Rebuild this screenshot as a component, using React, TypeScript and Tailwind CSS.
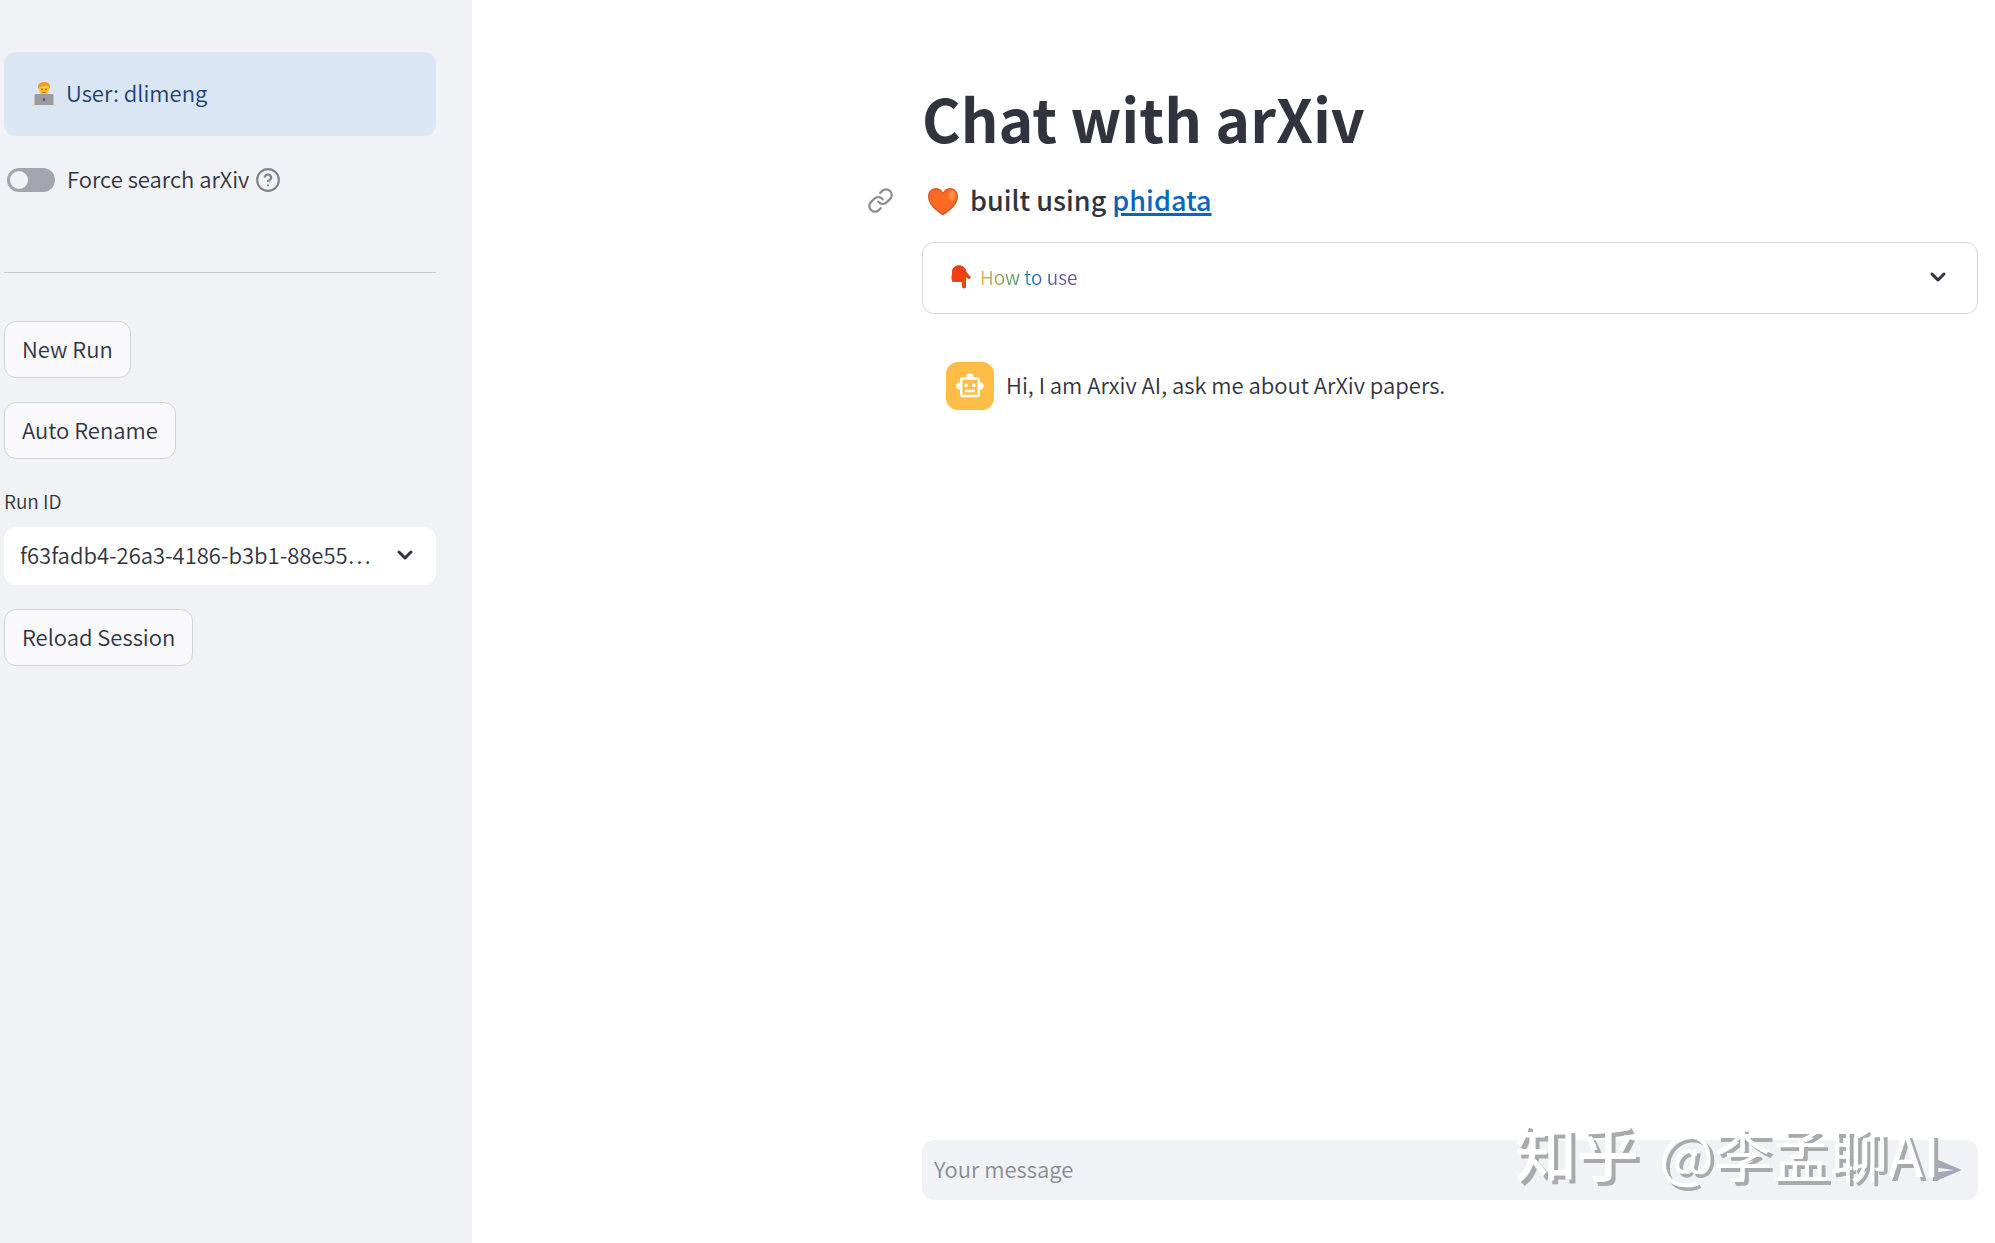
import { ChevronDown, CircleQuestionMark, Link } from 'lucide-react';
import { MdOutlineSmartToy, MdSend } from 'react-icons/md';

function TechnologistIcon() {
  return (
    <svg viewBox="0 0 24 24" className="w-6 h-6 shrink-0" aria-hidden="true">
      <path d="M3 22.500c0-5 3-7 9-7s9 2 9 7z" fill="#f6dc8c" />
      <rect x="9.500" y="10" width="5" height="6" fill="#e8a52a" />
      <ellipse cx="12" cy="7" rx="5.200" ry="6" fill="#fcc633" />
      <path d="M6.300 7C5 2 8 0 12 0s7 2 5.700 7c-.8-2.200-2-3-4-3.200-2.400-.2-5.800.2-7.400 3.200z" fill="#f09a2b" />
      <circle cx="10" cy="7.400" r=".8" fill="#6b4a1c" />
      <circle cx="14" cy="7.400" r=".8" fill="#6b4a1c" />
      <path d="M10.500 10.300h3" stroke="#bb3a22" strokeWidth="1" />
      <path d="M2.500 13.500q0-1.500 1.500-1.500h16q1.500 0 1.500 1.500V23h-19z" fill="#9b9b9f" />
      <rect x="10.800" y="16.500" width="2.400" height="2.400" fill="#5f5f66" />
      <path d="M0 23.500q.5-2.500 3-1.500v1.500zM21 23.500V22q2.500-1 3 1.500z" fill="#f5cf6b" />
    </svg>
  );
}

function HeartIcon() {
  return (
    <svg viewBox="0 0 30 28" className="w-[30px] h-7 shrink-0" aria-hidden="true">
      <path d="M15 27.500C7 22 0 16.500 0 8.500 0 3.500 3.500 0 7.800 0 11 0 13.500 1.600 15 4.400 16.500 1.600 19 0 22.200 0 26.500 0 30 3.500 30 8.500c0 8-7 13.500-15 19z" fill="#dc5a2a" />
      <path d="M15 25.500C8 20.500 1.300 15.500 1.300 8.500c0-4.300 2.900-7.100 6.600-7.100 3.300 0 5.700 2 7.100 5 1.400-3 3.800-5 7.100-5 3.700 0 6.600 2.800 6.600 7.100 0 7-6.700 12-13.700 17z" fill="#fb6a22" />
      <ellipse cx="24" cy="7.500" rx="3.300" ry="4.800" transform="rotate(18 24 7.500)" fill="#fb8e42" />
    </svg>
  );
}

function PointDownIcon() {
  return (
    <svg viewBox="0 0 20 24" className="w-5 h-6 shrink-0" aria-hidden="true">
      <path d="M1 8C1 3 4 .5 8 .5c4 0 6.500 2.500 7.500 6.500l4 4.800c.8 1.700-1 2.800-2.500 2L15 12.500v9.300c0 2.300-4 2.300-4 0V17l-9.500-.3C0 14 1 11 1 8z" fill="#d4500f" />
      <path d="M1 8C1 3 4 .5 8 .5c3.500 0 6 2 7 5.500l-3 6-1 4.500-9.500.2C0 14 1 11 1 8z" fill="#f03e10" />
    </svg>
  );
}

function SidebarButton({ children }: { children: string }) {
  return (
    <button
      type="button"
      className="h-[57px] px-[17px] pb-1 rounded-xl border border-[#d2d3d8] bg-[#f9f9fb] text-[22px] leading-8 whitespace-nowrap"
    >
      {children}
    </button>
  );
}

function Sidebar() {
  return (
    <aside className="w-[472px] shrink-0 bg-[#f0f2f6] pl-1 pr-9 pt-[52px]">
      <div className="h-[84px] px-7 flex items-center gap-2.5 rounded-xl bg-[#dae6f3] text-[#1c4173] text-[22px] leading-8">
        <TechnologistIcon />
        <p className="pb-1">User: dlimeng</p>
      </div>

      <div className="mt-7 h-8 pl-[3px] flex items-center">
        <label className="flex items-center gap-3 text-[22px] leading-8">
          <input
            type="checkbox"
            role="switch"
            className="appearance-none w-12 h-6 rounded-full bg-[#a3a4ad] before:block before:w-[18px] before:h-[18px] before:m-[3px] before:rounded-full before:bg-[#f0f2f6] checked:before:ml-[27px]"
          />
          <span className="pb-1">Force search arXiv</span>
        </label>
        <button type="button" aria-label="Help" className="ml-1.5 text-[#83848c]">
          <CircleQuestionMark size={26} />
        </button>
      </div>

      <hr className="mt-[76px] border-[#c9cbd1]" />

      <div className="mt-12 flex flex-col items-start gap-6">
        <SidebarButton>New Run</SidebarButton>
        <SidebarButton>Auto Rename</SidebarButton>
        <div className="w-full">
          <label htmlFor="run-id" className="block h-11 pt-1 text-[19px] leading-7">Run ID</label>
          <div className="relative">
            <select
              id="run-id"
              className="appearance-none w-full h-[58px] pl-4 pr-14 pb-1 rounded-xl bg-white text-[22px] leading-8"
            >
              <option>f63fadb4-26a3-4186-b3b1-88e55…</option>
            </select>
            <ChevronDown size={24} strokeWidth={3} className="absolute right-[19px] top-4 pointer-events-none" />
          </div>
        </div>
        <SidebarButton>Reload Session</SidebarButton>
      </div>
    </aside>
  );
}

export default function App() {
  return (
    <div className="flex min-h-screen bg-white text-[#31333f] font-[350] font-['Noto_Sans_CJK_KR',sans-serif]">
      <Sidebar />

      <main className="flex-1 min-w-0 flex flex-col pr-[17px] pl-[60px]">
        <div className="w-full max-w-[1056px] ml-auto flex-1 flex flex-col">
          <h1 className="mt-[78px] text-[59px] leading-20 font-bold">Chat with arXiv</h1>

          <div className="relative mt-[26px] h-9 flex items-center gap-3 pl-1.5 text-[27px] leading-9 font-medium">
            <a href="#built-using-phidata" aria-label="Link to heading" className="absolute -left-[55px] top-[3px] text-[#8b8c92]">
              <Link size={27} strokeWidth={2} />
            </a>
            <HeartIcon />
            <h3 id="built-using-phidata" className="pb-1">
              built using{' '}
              <a href="#phidata" className="text-[#0b64bd] underline decoration-[3px]">phidata</a>
            </h3>
          </div>

          <details className="mt-[22px] rounded-xl border border-[#d5d6d9]">
            <summary className="h-[70px] pl-7 pr-[27px] pb-0.5 flex items-center list-none">
              <PointDownIcon />
              <span className="ml-[9px] text-[19px] leading-7 text-transparent bg-clip-text bg-[linear-gradient(to_right,#e8b04a,#4f9e5e_35%,#2273c4_55%,#6a4fa3_80%,#6f4a9e)]">
                How to use
              </span>
              <ChevronDown size={24} strokeWidth={3} className="ml-auto" />
            </summary>
            <p className="px-7 pb-6 text-[19px] leading-7">Ask a question about any ArXiv paper.</p>
          </details>

          <div className="mt-12 pl-6 flex items-center gap-3">
            <div className="w-12 h-12 rounded-xl bg-[#ffbd45] text-white flex items-center justify-center">
              <MdOutlineSmartToy size={30} />
            </div>
            <p className="pb-1 text-[22px] leading-8">Hi, I am Arxiv AI, ask me about ArXiv papers.</p>
          </div>

          <form className="relative mt-auto mb-[43px] h-[60px] flex items-center rounded-xl bg-[#f0f2f6]">
            <input
              type="text"
              aria-label="Your message"
              placeholder="Your message"
              className="flex-1 min-w-0 h-full px-3 pb-1 text-[22px] leading-8 outline-none placeholder:text-[#898b97]"
            />
            <button type="button" aria-label="Send" className="mr-[15px] text-[#a3a8b8]">
              <MdSend size={30} />
            </button>
            <div className="absolute right-[38px] -top-[26px] flex items-baseline gap-5 text-[58px] leading-[72px] font-medium whitespace-nowrap text-white pointer-events-none font-['Noto_Sans_CJK_SC',sans-serif] [text-shadow:4px_4px_0_#a9aaac]">
              <span className="text-[62px]">知乎</span>
              <span className="font-normal">@李孟聊AI</span>
            </div>
          </form>
        </div>
      </main>
    </div>
  );
}
